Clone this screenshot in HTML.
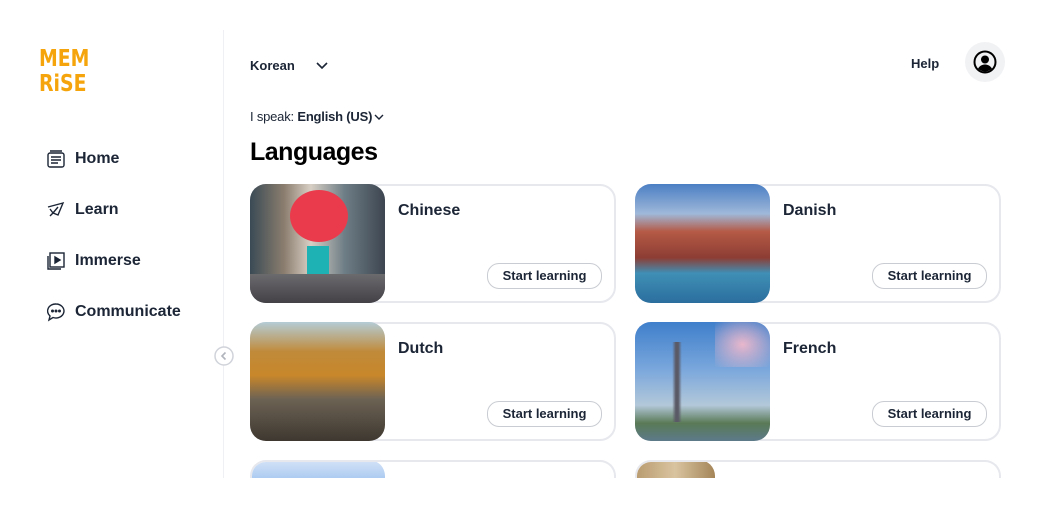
<!DOCTYPE html>
<html style="overflow:hidden;height:506px"><head><style>
*{margin:0;padding:0;box-sizing:border-box}
body{width:1046px;height:506px;background:#fff;font-family:"Liberation Sans",sans-serif;color:#1b2535;position:relative;overflow:hidden}
.abs{position:absolute}
.wrap{position:absolute;left:0;top:0;width:1046px;height:478px;overflow:hidden}
.logo{left:39px;top:47px;color:#f5a50b;font-weight:900;font-size:23px;line-height:25px;font-family:"DejaVu Sans",sans-serif;transform:scaleX(0.82);transform-origin:0 0}
.nav{left:46px;font-size:16px;font-weight:bold;display:flex;align-items:center;gap:9px}
.div{left:223px;top:30px;width:1px;height:448px;background:#eef0f3}
.card{position:absolute;width:366px;height:119px;border:2px solid #e6e8ee;border-radius:16px;background:#fff}
.img{position:absolute;left:-2px;top:-2px;width:135px;height:119px;border-radius:16px;overflow:hidden}
.t{position:absolute;left:146px;top:16px;font-size:16px;font-weight:bold}
.btn{position:absolute;left:235px;top:77px;width:115px;height:26px;border:1px solid #c9ccd2;border-radius:12px;font-size:13px;font-weight:bold;text-align:center;line-height:24px}
.last{height:18px;border-bottom:none;border-radius:16px 16px 0 0;overflow:hidden}
.last .img{height:20px;border-radius:16px 16px 0 0}
</style></head><body>
<div class="wrap">
<div class="abs logo">MEM<br>RiSE</div>
<div class="abs nav" style="top:149px"><svg width="20" height="20" viewBox="0 0 20 20" fill="none" stroke="#1b2535" stroke-width="1.4"><rect x="2" y="4" width="16" height="14" rx="2"/><path d="M4 2h12M5 8h10M5 11h10M5 14h7"/></svg>Home</div>
<div class="abs nav" style="top:200px"><svg width="20" height="20" viewBox="0 0 20 20" fill="none" stroke="#1b2535" stroke-width="1.4"><path d="M2 7l15-4-5 12-5-2-3 3M7 13l5-6M4 9l3 4"/></svg>Learn</div>
<div class="abs nav" style="top:251px"><svg width="20" height="20" viewBox="0 0 20 20" fill="none" stroke="#1b2535" stroke-width="1.4"><rect x="4" y="2" width="14" height="14"/><path d="M2 5v13h13"/><path d="M9 6v6l5-3z" fill="#1b2535"/></svg>Immerse</div>
<div class="abs nav" style="top:302px"><svg width="20" height="20" viewBox="0 0 20 20" fill="none" stroke="#1b2535" stroke-width="1.4"><path d="M10 2a8 7 0 1 1-3 13.5L3 18l1-4A8 7 0 0 1 10 2z"/><circle cx="6.5" cy="9" r=".8" fill="#1b2535"/><circle cx="10" cy="9" r=".8" fill="#1b2535"/><circle cx="13.5" cy="9" r=".8" fill="#1b2535"/></svg>Communicate</div>
<div class="abs div"></div>
<svg class="abs" style="left:214px;top:346px" width="20" height="20" viewBox="0 0 20 20"><circle cx="10" cy="10" r="9" fill="#fff" stroke="#d0d3da" stroke-width="1.5"/><path d="M11.5 6.5L8 10l3.5 3.5" fill="none" stroke="#b0b4bc" stroke-width="1.6"/></svg>
<div class="abs" style="left:250px;top:58px;font-size:13px;font-weight:bold">Korean</div>
<svg class="abs" style="left:316px;top:62px" width="12" height="8" viewBox="0 0 12 8"><path d="M1 1l5 5 5-5" fill="none" stroke="#1b2535" stroke-width="1.6"/></svg>
<div class="abs" style="left:250px;top:109px;font-size:13px;letter-spacing:-0.2px">I speak: <b>English (US)</b></div>
<svg class="abs" style="left:374px;top:114px" width="10" height="7" viewBox="0 0 10 7"><path d="M1 1l4 4 4-4" fill="none" stroke="#1b2535" stroke-width="1.4"/></svg>
<div class="abs" style="left:250px;top:138px;font-size:25px;font-weight:900;color:#000;letter-spacing:-0.5px">Languages</div>
<div class="abs" style="left:911px;top:56px;font-size:13px;font-weight:bold">Help</div>
<div class="abs" style="left:965px;top:42px;width:40px;height:40px;border-radius:50%;background:#f1f2f4"></div>
<svg class="abs" style="left:973px;top:50px" width="24" height="24" viewBox="0 0 24 24"><circle cx="12" cy="12" r="10.5" fill="none" stroke="#000" stroke-width="2"/><circle cx="12" cy="9.5" r="4" fill="#000"/><path d="M5 18.5c2-3 4.5-4 7-4s5 1 7 4c-2 2-4.5 3-7 3s-5-1-7-3z" fill="#000"/></svg>

<div class="card" style="left:250px;top:184px"><div class="img" style="background:linear-gradient(90deg,#3a4a55 0%,#8a7d6e 25%,#d8cfc4 45%,#6e7e86 70%,#3d4550 100%)"><div class="abs" style="left:40px;top:6px;width:58px;height:52px;border-radius:50%;background:#ea3b4c"></div><div class="abs" style="left:57px;top:62px;width:22px;height:30px;background:#1fb2b5"></div><div class="abs" style="left:0;top:90px;width:135px;height:30px;background:linear-gradient(#6b6a6d,#423f45)"></div></div><div class="t">Chinese</div><div class="btn">Start learning</div></div>
<div class="card" style="left:635px;top:184px"><div class="img" style="background:linear-gradient(#4b7fc4 0%,#9fb8d9 25%,#b55a46 40%,#8d3d34 62%,#3f8fb6 75%,#2b6e9e 100%)"></div><div class="t">Danish</div><div class="btn">Start learning</div></div>
<div class="card" style="left:250px;top:322px"><div class="img" style="background:linear-gradient(#b4ccd6 0%,#c08a3a 25%,#c8872a 45%,#6c6254 65%,#3e3830 100%)"></div><div class="t">Dutch</div><div class="btn">Start learning</div></div>
<div class="card" style="left:635px;top:322px"><div class="img" style="background:linear-gradient(#3f7fcb 0%,#7aa7dc 40%,#b3c8d9 70%,#5a7a56 85%,#5c7a8a 100%)"><div class="abs" style="left:80px;top:0;width:55px;height:45px;background:radial-gradient(#e9b7cc,rgba(233,183,204,0))"></div><div class="abs" style="left:30px;top:20px;width:24px;height:80px;background:linear-gradient(90deg,transparent 30%,#5a5a66 45%,#5a5a66 55%,transparent 70%)"></div></div><div class="t">French</div><div class="btn">Start learning</div></div>
<div class="card last" style="left:250px;top:460px"><div class="img" style="background:linear-gradient(#d4e3f7,#a9c9f0)"></div></div>
<div class="card last" style="left:635px;top:460px"><div class="img" style="width:80px;background:linear-gradient(90deg,#b89a6e,#d9c4a0,#a48558)"></div></div>
</div>
</body></html>
